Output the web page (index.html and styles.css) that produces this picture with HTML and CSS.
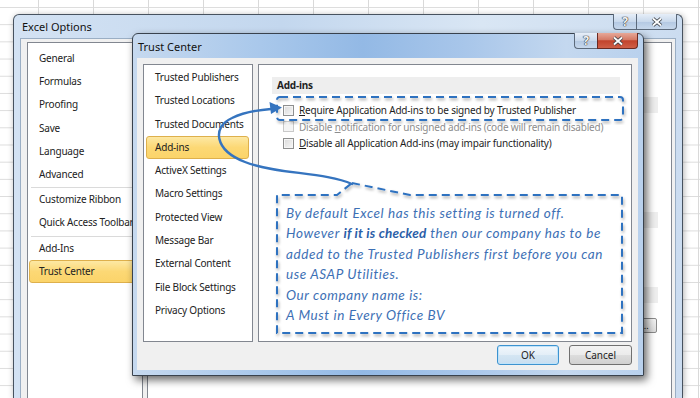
FILE: index.html
```html
<!DOCTYPE html>
<html lang="en">
<head>
    <meta charset="UTF-8">
    <title>Excel Options - Trust Center</title>
    <link rel="stylesheet" href="styles.css">
</head>
<body>

    <!-- Excel Options window (behind) -->
    <div class="window options">
        <div class="titlebar">
            <span class="title">Excel Options</span>
            <div class="caps">
                <span class="cap help">?</span>
                <span class="cap close">
                    <svg width="14" height="10" viewBox="0 0 14 10"><path class="x-out" d="M3,1.5 L11,8.5 M11,1.5 L3,8.5"/><path class="x-in" d="M3,1.5 L11,8.5 M11,1.5 L3,8.5"/></svg>
                </span>
            </div>
        </div>
        <div class="client">
            <ul class="nav">
                <li>General</li>
                <li>Formulas</li>
                <li>Proofing</li>
                <li>Save</li>
                <li>Language</li>
                <li>Advanced</li>
                <li class="sep"></li>
                <li>Customize Ribbon</li>
                <li>Quick Access Toolbar</li>
                <li class="sep"></li>
                <li>Add-Ins</li>
                <li class="active">Trust Center</li>
            </ul>
            <div class="content">
                <div class="sec-bar"></div>
                <div class="sec-bar second"></div>
                <div class="sec-bar third"></div>
                <button class="more">...</button>
            </div>
        </div>
    </div>

    <!-- Trust Center dialog (front) -->
    <div class="window trust">
        <div class="titlebar">
            <span class="title">Trust Center</span>
            <div class="caps">
                <span class="cap help">?</span>
                <span class="cap close red">
                    <svg width="14" height="10" viewBox="0 0 14 10"><path class="x-out" d="M3,1.5 L11,8.5 M11,1.5 L3,8.5"/><path class="x-in" d="M3,1.5 L11,8.5 M11,1.5 L3,8.5"/></svg>
                </span>
            </div>
        </div>
        <div class="client">
            <div class="main">
                <ul class="nav">
                    <li>Trusted Publishers</li>
                    <li>Trusted Locations</li>
                    <li>Trusted Documents</li>
                    <li class="active">Add-ins</li>
                    <li>ActiveX Settings</li>
                    <li>Macro Settings</li>
                    <li>Protected View</li>
                    <li>Message Bar</li>
                    <li>External Content</li>
                    <li>File Block Settings</li>
                    <li>Privacy Options</li>
                </ul>
                <div class="panel">
                    <div class="panel-head">Add-ins</div>
                    <div class="check"><span class="box"></span><span><u>R</u>equire Application Add-ins to be signed by Trusted Publisher</span></div>
                    <div class="check disabled"><span class="box"></span><span>Disable <u>n</u>otification for unsigned add-ins (code will remain disabled)</span></div>
                    <div class="check"><span class="box"></span><span><u>D</u>isable all Application Add-ins (may impair functionality)</span></div>
                    <div class="note">
                        By default Excel has this setting is turned off.<br>
                        However <b>if it is checked</b> then our company has to be<br>
                        added to the Trusted Publishers first before you can<br>
                        use ASAP Utilities.<br>
                        Our company name is:<br>
                        A Must in Every Office BV
                    </div>
                </div>
            </div>
            <div class="actions">
                <button class="btn default">OK</button>
                <button class="btn">Cancel</button>
            </div>
        </div>
    </div>

    <!-- hand-drawn annotations over the dialog -->
    <svg class="annotations" width="700" height="398" viewBox="0 0 700 398">
        <defs>
            <filter id="soft" x="-5%" y="-20%" width="110%" height="140%">
                <feDropShadow dx="1" dy="2" stdDeviation="1.6" flood-color="#000" flood-opacity="0.35"/>
            </filter>
        </defs>
        <rect class="dash" x="277" y="97" width="346" height="23" rx="3"/>
        <path class="dash" d="M352,183 L410,195 L622,195 L622,333 L277,333 L277,195 L337,195 Z"/>
        <path class="curve" d="M352,184 C325,172 275,174 245,162 C214,150 212,127 232,118 C244,112 258,110 271,109"/>
        <polygon class="head" points="282,107.5 269.5,102 271,114"/>
    </svg>

</body>
</html>
```

FILE: styles.css
```css
/* Spreadsheet grid behind the dialogs */
* {
    box-sizing: border-box;
}

body {
    margin: 0;
    width: 700px;
    height: 398px;
    overflow: hidden;
    position: relative;
    font-family: "Noto Sans", "Open Sans", sans-serif;
    font-size: 10px;
    letter-spacing: -0.2px;
    color: #222;
    background-color: #fff;
    background-image:
        linear-gradient(90deg, #d9d9d9 1px, transparent 1px),
        linear-gradient(180deg, #dcdcdc 1px, transparent 1px);
    background-size: 55px 100%, 100% 17.2px;
    background-position: 38px 0, 0 7px;
}

ul {
    list-style: none;
    margin: 0;
    padding: 0;
}

/* Aero style window frame */
.window {
    position: absolute;
    display: flex;
    flex-direction: column;
    border: 1px solid #47525f;
    border-radius: 6px 6px 0 0;
    background: linear-gradient(90deg, #d3e2f3, #c3d7ee 40%, #d9e6f4 70%, #cbdcf0);
}

/* runs on past the bottom of the screenshot */
.options {
    left: 13px;
    top: 14px;
    width: 670px;
    height: 384px;
    padding: 0 6px;
    border-bottom: none;
    box-shadow: 1px 1px 6px rgba(0, 0, 0, 0.3);
}

.trust {
    left: 132px;
    top: 33px;
    width: 512px;
    height: 343px;
    padding: 0 5px 5px 4px;
    border-color: #39424d;
    background: linear-gradient(90deg, #c6d9ef 0%, #a9c8eb 25%, #93b9e5 45%, #a8c6ea 65%, #c4d8ef 85%, #b9d1ed 100%);
    box-shadow: 3px 4px 9px rgba(0, 0, 0, 0.6);
}

.titlebar {
    display: flex;
    align-items: center;
    height: 23px;
    flex-shrink: 0;
}

.trust .titlebar {
    height: 24px;
}

.title {
    padding-left: 2px;
    font-size: 11px;
    letter-spacing: 0;
    color: #111;
}

.trust .title {
    padding-left: 1px;
}

.caps {
    display: flex;
    margin-left: auto;
    margin-right: -1px;
    align-self: flex-start;
    margin-top: -1px;
}

.trust .caps {
    margin-right: 0;
}

.cap {
    display: flex;
    align-items: center;
    justify-content: center;
    height: 16px;
    border: 1px solid #5c6a7b;
    border-top: none;
    background: linear-gradient(#e6eef8, #c9d9ec 50%, #b3c8e2 51%, #c7d8ec);
}

.cap.help {
    width: 23px;
    border-right: none;
    border-radius: 0 0 0 4px;
    font-size: 12px;
    font-weight: bold;
    color: #f2f4f7;
    text-shadow: 0 0 1px #333, 0 0 1px #333, 0 0 1px #333;
}

.cap.close {
    width: 41px;
    border-radius: 0 0 4px 0;
}

.cap.close.red {
    border-color: #6a2a22;
    background: linear-gradient(#e7a898, #d47a66 45%, #c2432c 52%, #cf5f47);
}

.x-out {
    fill: none;
    stroke: #3b3f45;
    stroke-width: 3.6;
}

.x-in {
    fill: none;
    stroke: #fff;
    stroke-width: 1.8;
}

/* Client areas */
.client {
    flex: 1;
    display: flex;
    background-color: #f0f0f0;
    border: 1px solid #9aaec4;
}

.options .client {
    padding: 3px 3px 0 6px;
    gap: 4px;
    border-bottom: none;
}

.trust .client {
    flex-direction: column;
    border: none;
    padding: 6px 6px 5px 6px;
}

.nav {
    background-color: #fff;
    border: 1px solid #828790;
    flex-shrink: 0;
}

.nav li {
    height: 23.2px;
    line-height: 21.2px;
    border: 1px solid transparent;
    border-radius: 3px;
    white-space: nowrap;
    overflow: hidden;
}

.nav li.active {
    background: linear-gradient(#fde8a4, #fcd875 50%, #fbd46a);
    border-color: #deb04c;
}

.nav li.sep {
    height: 1px;
    margin-top: 1px;
    margin-bottom: 0;
    border: none;
    border-radius: 0;
    background-color: #dadada;
}

.options .nav {
    width: 116px;
    padding-top: 4px;
    border-bottom: none;
}

.options .nav li {
    margin: 0 3px 0 1px;
    padding-left: 9px;
}

.options .nav li.sep {
    margin: 1px 0 0 3px;
}

.options .content {
    flex: 1;
    display: flex;
    flex-direction: column;
    background-color: #fff;
    border: 1px solid #828790;
    border-bottom: none;
    padding-top: 54px;
}

.sec-bar {
    height: 16px;
    margin: 0 13px 0 12px;
    background-color: #eeeeee;
}

.sec-bar.second {
    margin-top: 99px;
}

.sec-bar.third {
    margin-top: 59px;
}

.more {
    align-self: flex-end;
    width: 24px;
    height: 15px;
    margin: 15px 14px 0 0;
    padding: 0;
    border: 1px solid #8a8a8a;
    border-radius: 2px;
    background: linear-gradient(#f4f4f4, #dcdcdc);
    font: inherit;
    font-size: 9px;
    line-height: 9px;
}

/* Trust Center contents */
.main {
    flex: 1;
    display: flex;
    gap: 5px;
}

.trust .nav {
    width: 110px;
    padding-top: 1px;
}

.trust .nav li {
    height: 23.3px;
    line-height: 21.3px;
    margin: 0 3px 0 2px;
    padding-left: 8px;
}

.panel {
    flex: 1;
    background-color: #fff;
    border: 1px solid #828790;
}

.panel-head {
    height: 17px;
    line-height: 17px;
    margin: 12px 11px 8px 13px;
    padding-left: 5px;
    background-color: #eeeeee;
    font-weight: bold;
    color: #1e1e1e;
}

.check {
    display: flex;
    align-items: center;
    height: 16.5px;
    padding-left: 24px;
    color: #1e1e1e;
    white-space: nowrap;
}

.box {
    width: 11px;
    height: 11px;
    margin-right: 5px;
    border: 1px solid #8e8f8f;
    background: linear-gradient(135deg, #dadada, #f7f7f7);
    box-shadow: inset 0 0 0 1px #f5f5f5;
    flex-shrink: 0;
}

.check.disabled {
    color: #8d8d8d;
}

.check.disabled .box {
    border-color: #c9c9c9;
    background: #f4f4f4;
}

.note {
    height: 138px;
    margin: 43.5px 9px 0 18px;
    padding: 8px 10px 0 9px;
    font-family: Lato, "Open Sans", sans-serif;
    font-style: italic;
    font-size: 13.5px;
    letter-spacing: 0.6px;
    line-height: 20.4px;
    color: #3d70b5;
    white-space: nowrap;
}

.note b {
    color: #2b5ea8;
    letter-spacing: 0.2px;
}

.actions {
    display: flex;
    justify-content: flex-end;
    gap: 10px;
    margin-top: 3px;
}

.btn {
    width: 62px;
    height: 20px;
    padding: 0;
    border: 1px solid #707070;
    border-radius: 3px;
    background: linear-gradient(#f3f3f3, #ebebeb 50%, #dddddd 51%, #d0d0d0);
    font: inherit;
    color: #1e1e1e;
}

.btn + .btn {
    width: 63px;
}

.btn.default {
    border-color: #3d93d0;
    background: linear-gradient(#f1f7fc, #e3eef7 50%, #d4e6f3 51%, #c9def0);
    box-shadow: inset 0 0 0 1px #bfe3fa;
}

/* Annotation layer */
.annotations {
    position: absolute;
    left: 0;
    top: 0;
    pointer-events: none;
}

.dash {
    fill: none;
    stroke: #2f72c0;
    stroke-width: 2;
    stroke-dasharray: 8 5;
    filter: url(#soft);
}

.curve {
    fill: none;
    stroke: #3574bf;
    stroke-width: 2.4;
    stroke-linecap: round;
}

.head {
    fill: #3574bf;
}
```
